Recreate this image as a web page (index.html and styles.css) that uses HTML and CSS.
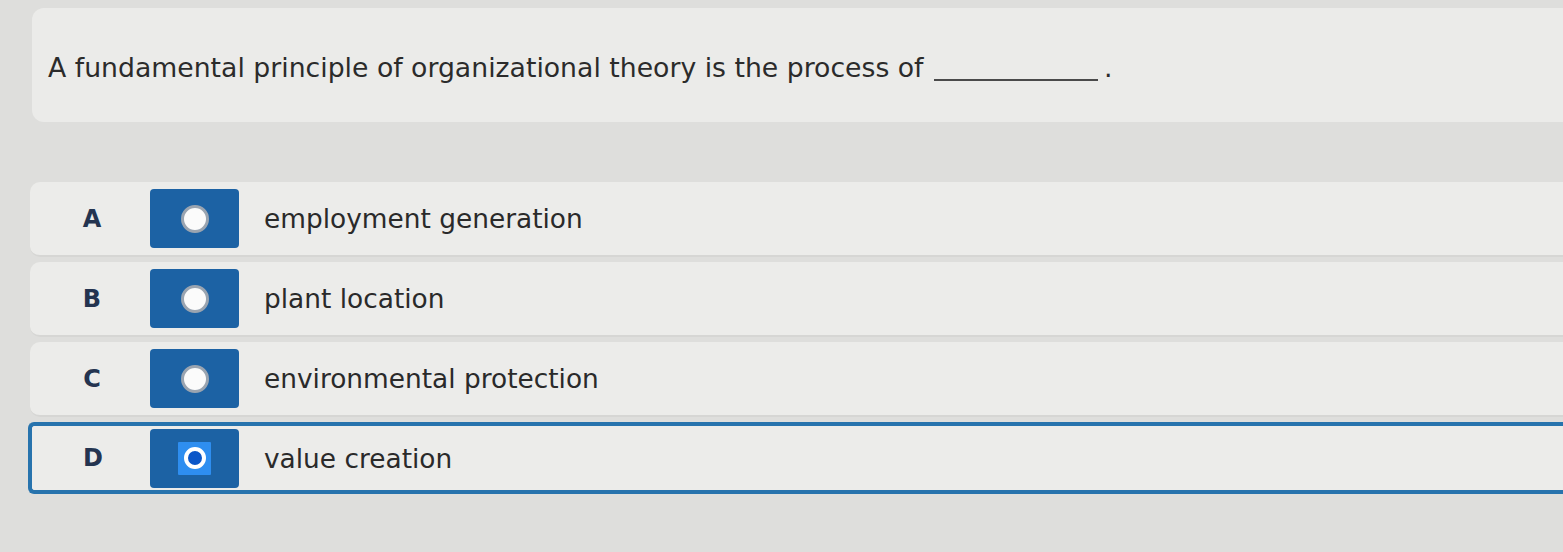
FILE: index.html
```html
<!DOCTYPE html>
<html lang="en">
<head>
<meta charset="utf-8">
<title>Question</title>
<link rel="stylesheet" href="styles.css">
</head>
<body>
<main class="page">
  <section class="question">
    <p class="stem">A fundamental principle of organizational theory is the process of <span class="blank"></span>.</p>
  </section>
  <ul class="options">
    <li class="option">
      <span class="letter">A</span>
      <span class="radio-box"><span class="radio"></span></span>
      <span class="label">employment generation</span>
    </li>
    <li class="option">
      <span class="letter">B</span>
      <span class="radio-box"><span class="radio"></span></span>
      <span class="label">plant location</span>
    </li>
    <li class="option">
      <span class="letter">C</span>
      <span class="radio-box"><span class="radio"></span></span>
      <span class="label">environmental protection</span>
    </li>
    <li class="option selected">
      <span class="letter">D</span>
      <span class="radio-box"><span class="radio checked"></span></span>
      <span class="label">value creation</span>
    </li>
  </ul>
</main>
</body>
</html>
```
FILE: styles.css
```css
html, body {
  margin: 0;
  padding: 0;
}
body {
  background: #dededc;
  font-family: "DejaVu Sans", Verdana, sans-serif;
  color: #2b2b2b;
  width: 1563px;
  height: 552px;
  overflow: hidden;
}
.page {
  padding: 8px 0 0 30px;
}
.question {
  background: #ebebe9;
  border-radius: 12px 0 0 12px;
  height: 114px;
  margin-left: 2px;
  display: flex;
  align-items: center;
  padding-left: 16px;
  padding-bottom: 4px;
  box-sizing: border-box;
}
.stem {
  margin: 0;
  font-size: 26.7px;
  padding-top: 8px;
}
.blank {
  display: inline-block;
  width: 164px;
  border-bottom: 2px solid #4a4a4a;
  margin-left: 2px;
  margin-right: 6px;
  vertical-align: -4px;
}
.options {
  list-style: none;
  margin: 60px 0 0 0;
  padding: 0;
  display: flex;
  flex-direction: column;
  gap: 5px;
}
.option {
  background: #ececea;
  border-radius: 10px 0 0 10px;
  height: 75px;
  display: flex;
  align-items: center;
  box-sizing: border-box;
  border-bottom: 2px solid #d6d6d4;
}
.letter {
  width: 120px;
  text-align: center;
  font-weight: bold;
  font-size: 24px;
  color: #243450;
  box-sizing: border-box;
  padding-left: 4px;
}
.radio-box {
  width: 89px;
  height: 59px;
  background: #1c62a4;
  border-radius: 4px;
  display: flex;
  align-items: center;
  justify-content: center;
  margin-right: 25px;
}
.radio {
  width: 28px;
  height: 28px;
  border-radius: 50%;
  background: #fbfbfb;
  border: 3px solid #9aa4b0;
  box-sizing: border-box;
}
.radio.checked {
  width: 33px;
  height: 33px;
  border-radius: 1px;
  border: none;
  background: #2e8ef0;
  display: flex;
  align-items: center;
  justify-content: center;
}
.radio.checked::after {
  content: "";
  width: 22px;
  height: 22px;
  border-radius: 50%;
  border: 4px solid #ffffff;
  background: #0b56c8;
  box-sizing: border-box;
}
.label {
  font-size: 26.4px;
  color: #2a2a2a;
}
.option.selected {
  height: 72px;
  border: 4px solid #2773ad;
  border-right: none;
  border-radius: 6px 0 0 6px;
  margin-left: -2px;
}
.option.selected .letter {
  width: 118px;
}
```
